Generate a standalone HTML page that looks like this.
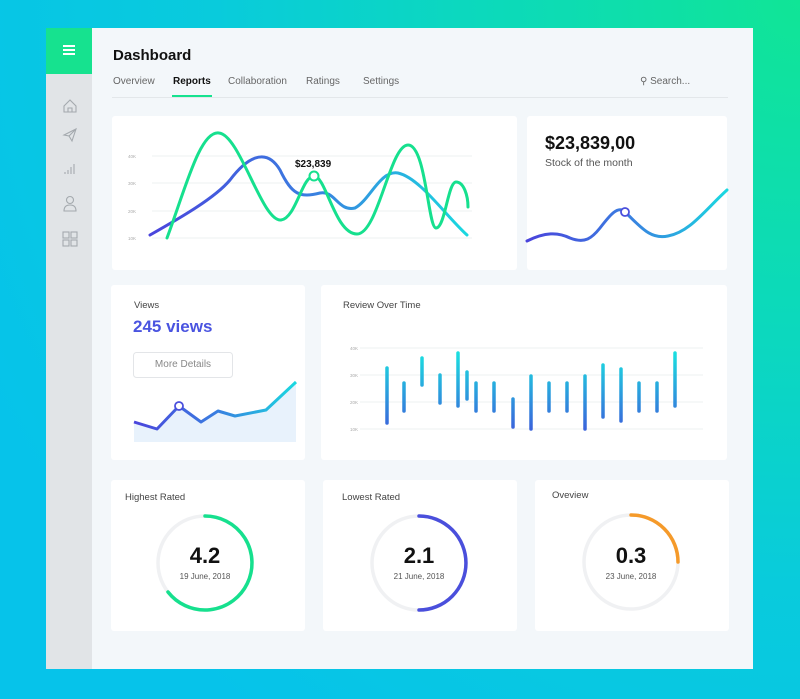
<!DOCTYPE html>
<html><head><meta charset="utf-8"><style>
*{margin:0;padding:0;box-sizing:border-box}
body{width:800px;height:699px;overflow:hidden;background:radial-gradient(circle at 800px 0px,#10e596 0%,#0cd9bc 30%,#09cbdc 55%,#06c3ea 85%);font-family:"Liberation Sans",sans-serif;position:relative}
.abs{position:absolute}
.card{position:absolute;background:#fff;border-radius:3px}
.t{position:absolute;white-space:nowrap}
</style></head><body>
<div class="abs" style="left:46px;top:28px;width:707px;height:641px;background:#f3f7fa"></div>
<div class="abs" style="left:46px;top:28px;width:46px;height:641px;background:#e1e4e7"></div>
<div class="abs" style="left:46px;top:28px;width:46px;height:46px;background:#16e28f"></div>
<div class="abs" style="left:63px;top:45px;width:12px;height:2px;background:#fff;box-shadow:0 4px 0 #fff,0 8px 0 #fff"></div>
<svg class="abs" style="left:46px;top:80px" width="46" height="180" fill="none" stroke="#a4a9ae" stroke-width="1.1">
<path d="M18 26 L24 20 L30 26 V32 H18 Z M22 32 V28 H26 V32"/>
<path d="M18 55 L30 49 L26 61 L23 56 Z M23 56 L30 49"/>
<path d="M19 94 V92 M22 94 V90 M25 94 V87 M28 94 V84"/>
<circle cx="24" cy="120" r="3.5"/><path d="M18 131 Q18 125 24 125 Q30 125 30 131 Z"/>
<rect x="17" y="152" width="6" height="6"/><rect x="25" y="152" width="6" height="6"/><rect x="17" y="160" width="6" height="6"/><rect x="25" y="160" width="6" height="6"/>
</svg>
<div class="t" style="left:113px;top:47px;font-size:15px;font-weight:bold;color:#111">Dashboard</div>
<div class="t" style="left:113px;top:76px;font-size:10px;color:#666">Overview</div>
<div class="t" style="left:173px;top:76px;font-size:10px;color:#111;font-weight:bold">Reports</div>
<div class="t" style="left:228px;top:76px;font-size:10px;color:#666">Collaboration</div>
<div class="t" style="left:306px;top:76px;font-size:10px;color:#666">Ratings</div>
<div class="t" style="left:363px;top:76px;font-size:10px;color:#666">Settings</div>
<div class="t" style="left:640px;top:76px;font-size:10px;color:#666">⚲ Search...</div>
<div class="abs" style="left:112px;top:97px;width:616px;height:1px;background:#e3e7ea"></div>
<div class="abs" style="left:172px;top:95px;width:40px;height:2px;background:#16e28f"></div>

<div class="card" style="left:112px;top:116px;width:405px;height:154px"></div>
<svg class="abs" style="left:0;top:0" width="800" height="699" fill="none">
<defs>
<linearGradient id="bg1" x1="0" x2="1"><stop offset="0" stop-color="#4a44dc"/><stop offset=".5" stop-color="#3a7de0"/><stop offset="1" stop-color="#1ad8e0"/></linearGradient>
<linearGradient id="bar" x1="0" y1="1" x2="0" y2="0"><stop offset="0" stop-color="#3a63db"/><stop offset="1" stop-color="#1adfe0"/></linearGradient>
</defs>
<g stroke="#eef0f2" stroke-width="1"><path d="M152 156H472M152 183H472M152 211H472M152 238H472"/></g>
<g fill="#aaa" font-size="4.5" font-family="Liberation Sans"><text x="128" y="158">40K</text><text x="128" y="185">30K</text><text x="128" y="213">20K</text><text x="128" y="240">10K</text></g>
<path d="M150 235 C180 218 215 198 230 180 C245 160 265 145 280 170 C292 195 300 198 320 193 C335 190 338 212 355 208 C370 200 380 170 398 173 C420 178 445 215 467 235" stroke="url(#bg1)" stroke-width="3" stroke-linecap="round"/>
<path d="M167 238 C185 190 200 130 219 133 C240 135 262 222 281 220 C296 218 302 176 314 176 C326 176 335 234 357 234 C378 234 390 145 408 145 C426 145 428 228 436 228 C445 228 448 182 456 182 C464 182 468 196 468 207" stroke="#16e08e" stroke-width="3" stroke-linecap="round"/>
<circle cx="314" cy="176" r="4.5" fill="#fff" stroke="#16e08e" stroke-width="2"/>
<text x="295" y="167" font-size="10" font-weight="bold" fill="#111" font-family="Liberation Sans">$23,839</text>

<rect x="527" y="116" width="200" height="154" rx="3" fill="#fff"/>
<path d="M527 241 C545 232 558 232 570 238 C585 244 592 238 600 228 C610 215 618 205 625 212 C640 226 650 240 668 236 C690 232 705 210 727 190" stroke="url(#bg1)" stroke-width="3" stroke-linecap="round"/>
<circle cx="625" cy="212" r="4" fill="#fff" stroke="#4a4fdc" stroke-width="1.8"/>

<rect x="111" y="285" width="194" height="175" rx="3" fill="#fff"/>
<path d="M134 422 L157 429 L179 406 L201 422 L218 411 L235 416 L266 410 L296 382 V442 H134 Z" fill="#e8f2fc"/>
<path d="M134 422 L157 429 L179 406 L201 422 L218 411 L235 416 L266 410 L296 382" stroke="url(#bg1)" stroke-width="3" stroke-linejoin="round"/>
<circle cx="179" cy="406" r="4" fill="#fff" stroke="#4a4fdc" stroke-width="1.8"/>
<rect x="133.5" y="352.5" width="99" height="25" rx="3" fill="#fff" stroke="#e3e5e8"/>

<rect x="321" y="285" width="406" height="175" rx="3" fill="#fff"/>
<g stroke="#eef0f2"><path d="M360 348H703M360 375H703M360 402H703M360 429H703"/></g>
<g fill="#aaa" font-size="4.5" font-family="Liberation Sans"><text x="350" y="350">40K</text><text x="350" y="377">30K</text><text x="350" y="404">20K</text><text x="350" y="431">10K</text></g>
<g stroke="url(#bar)" stroke-width="3.5" stroke-linecap="round">
<path d="M387 368V423M404 383V411M422 358V385M440 375V403M458 353V406M467 372V399M476 383V411M494 383V411M513 399V427M531 376V429M549 383V411M567 383V411M585 376V429M603 365V417M621 369V421M639 383V411M657 383V411M675 353V406"/>
</g>

<rect x="111" y="480" width="194" height="151" rx="3" fill="#fff"/>
<rect x="323" y="480" width="194" height="151" rx="3" fill="#fff"/>
<rect x="535" y="480" width="194" height="151" rx="3" fill="#fff"/>
<g stroke-width="3.5" fill="none">
<circle cx="205" cy="563" r="47" stroke="#f0f1f3"/>
<path d="M205 516 A47 47 0 1 1 168 592" stroke="#16e08e" stroke-linecap="round"/>
<circle cx="419" cy="563" r="47" stroke="#f0f1f3"/>
<path d="M419 516 A47 47 0 0 1 419 610" stroke="#4a4fdc" stroke-linecap="round"/>
<circle cx="631" cy="562" r="47" stroke="#f0f1f3"/>
<path d="M631 515 A47 47 0 0 1 678 562" stroke="#f59a2a" stroke-linecap="round"/>
</g>
</svg>
<div class="t" style="left:545px;top:133px;font-size:18px;font-weight:bold;color:#111">$23,839,00</div>
<div class="t" style="left:545px;top:157px;font-size:10.5px;color:#555">Stock of the month</div>
<div class="t" style="left:134px;top:300px;font-size:9.5px;color:#444">Views</div>
<div class="t" style="left:133px;top:317px;font-size:17px;font-weight:bold;color:#4a54e0">245 views</div>
<div class="t" style="left:133px;top:359px;width:100px;text-align:center;font-size:10px;color:#888">More Details</div>
<div class="t" style="left:343px;top:300px;font-size:9.5px;color:#444">Review Over Time</div>
<div class="t" style="left:125px;top:492px;font-size:9.5px;color:#444">Highest Rated</div>
<div class="t" style="left:342px;top:492px;font-size:9.5px;color:#444">Lowest Rated</div>
<div class="t" style="left:552px;top:490px;font-size:9.5px;color:#444">Oveview</div>
<div class="t" style="left:155px;top:543px;width:100px;text-align:center;font-size:22px;font-weight:bold;color:#111">4.2</div>
<div class="t" style="left:155px;top:572px;width:100px;text-align:center;font-size:8px;color:#555">19 June, 2018</div>
<div class="t" style="left:369px;top:543px;width:100px;text-align:center;font-size:22px;font-weight:bold;color:#111">2.1</div>
<div class="t" style="left:369px;top:572px;width:100px;text-align:center;font-size:8px;color:#555">21 June, 2018</div>
<div class="t" style="left:581px;top:543px;width:100px;text-align:center;font-size:22px;font-weight:bold;color:#111">0.3</div>
<div class="t" style="left:581px;top:572px;width:100px;text-align:center;font-size:8px;color:#555">23 June, 2018</div>
</body></html>
